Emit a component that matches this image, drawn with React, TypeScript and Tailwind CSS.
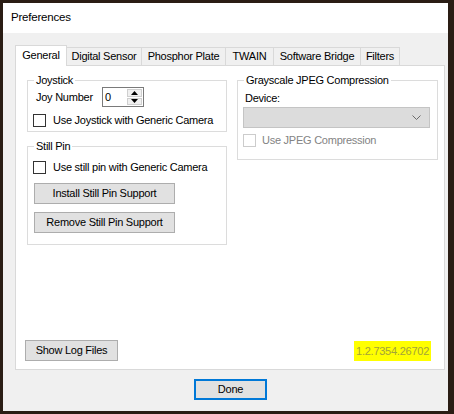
import React from "react";

const font = "font-['Liberation_Sans',Arial,sans-serif]";

const tabs = [
  { label: "General", w: "w-[52px]" },
  { label: "Digital Sensor", w: "w-[76px]" },
  { label: "Phosphor Plate", w: "w-[85px]" },
  { label: "TWAIN", w: "w-[49px]" },
  { label: "Software Bridge", w: "w-[88px]" },
  { label: "Filters", w: "w-[40px]" },
];

function Check({ disabled = false }: { disabled?: boolean }) {
  return (
    <span
      className={
        "inline-block h-[13px] w-[13px] shrink-0 border bg-white " +
        (disabled ? "border-[#cccccc]" : "border-[#333333]")
      }
    />
  );
}

function Button({ children, w }: { children: React.ReactNode; w: string }) {
  return (
    <div
      className={
        "flex h-[21px] items-center justify-center border border-[#adadad] bg-[#e1e1e1] leading-none " +
        w
      }
    >
      {children}
    </div>
  );
}

function Group({
  legend,
  className,
  children,
}: {
  legend: string;
  className?: string;
  children: React.ReactNode;
}) {
  return (
    <div className={"relative border border-[#dcdcdc] " + (className ?? "")}>
      {/* legend sits over the top border */}
      <span className="absolute -top-[8px] left-[6px] bg-white px-[2px] leading-[14px]">
        {legend}
      </span>
      {children}
    </div>
  );
}

function Spinner() {
  return (
    <div className="flex h-[20px] w-[42px] items-stretch border border-[#7a7a7a] bg-white">
      <span className="flex-1 pl-[2px] leading-[18px]">0</span>
      <div className="my-[1px] mr-[1px] flex w-[15px] flex-col gap-px">
        <div className="flex flex-1 items-center justify-center border border-[#cfcfcf] bg-[#f0f0f0]">
          <svg width="7" height="4" viewBox="0 0 7 4">
            <path d="M0 4 L3.5 0 L7 4 Z" fill="#000" />
          </svg>
        </div>
        <div className="flex flex-1 items-center justify-center border border-[#cfcfcf] bg-[#f0f0f0]">
          <svg width="7" height="4" viewBox="0 0 7 4">
            <path d="M0 0 L3.5 4 L7 0 Z" fill="#000" />
          </svg>
        </div>
      </div>
    </div>
  );
}

export default function App() {
  return (
    <div
      className={
        "h-[414px] w-[454px] overflow-hidden bg-[#2a1d14] pl-[3px] pt-[3px] text-[11px] tracking-[-0.25px] text-black " +
        font
      }
    >
      <div className="flex h-[408px] w-[445px] flex-col bg-[#f0f0f0]">
        {/* Title bar */}
        <div className="flex h-[30px] items-center bg-white pl-[8px] text-[11.5px] tracking-[-0.2px]">
          Preferences
        </div>

        <div className="pl-[12px] pr-[3px] pt-[12px]">
          {/* Tabs */}
          <div className="flex h-[20px] items-start">
            {tabs.map((t, i) =>
              i === 0 ? (
                <div
                  key={t.label}
                  className={
                    "relative z-10 flex h-[21px] items-center justify-center border-x border-t border-[#d9d9d9] bg-white pb-[2px] " +
                    t.w
                  }
                >
                  {t.label}
                </div>
              ) : (
                <div
                  key={t.label}
                  className={
                    "-ml-px mt-[2px] flex h-[18px] items-center justify-center border-x border-t border-[#d9d9d9] bg-[#f0f0f0] " +
                    t.w
                  }
                >
                  {t.label}
                </div>
              )
            )}
          </div>

          {/* Tab page */}
          <div className="flex h-[305px] flex-col border border-[#d9d9d9] bg-white">
            <div className="flex items-start gap-[10px] pl-[11px] pt-[14px]">
              {/* Left column */}
              <div className="flex w-[200px] flex-col">
                <Group legend="Joystick" className="pb-[4px] pt-[6px]">
                  <div className="flex items-center">
                    <span className="w-[74px] pl-[8px]">Joy Number</span>
                    <Spinner />
                  </div>
                  <div className="mt-[7px] flex items-center gap-[7px] pl-[5px]">
                    <Check />
                    <span className="leading-[13px]">Use Joystick with Generic Camera</span>
                  </div>
                </Group>

                <Group legend="Still Pin" className="mt-[14px] pb-[11px] pt-[14px]">
                  <div className="flex items-center gap-[7px] pl-[5px]">
                    <Check />
                    <span className="leading-[13px]">Use still pin with Generic Camera</span>
                  </div>
                  <div className="ml-[6px] mt-[9px]">
                    <Button w="w-[141px]">Install Still Pin Support</Button>
                  </div>
                  <div className="ml-[6px] mt-[8px]">
                    <Button w="w-[141px]">Remove Still Pin Support</Button>
                  </div>
                </Group>
              </div>

              {/* Right column */}
              <Group legend="Grayscale JPEG Compression" className="w-[201px] pb-[12px] pt-[10px]">
                <div className="pl-[7px] leading-[14px]">Device:</div>
                <div className="ml-[5px] mt-[2px] flex h-[21px] w-[187px] items-center justify-end border border-[#c4c4c4] bg-[#dcdcdc] pr-[8px]">
                  <svg width="9" height="5" viewBox="0 0 9 5">
                    <path d="M0.5 0.5 L4.5 4.5 L8.5 0.5" fill="none" stroke="#6a6a6a" strokeWidth="1" />
                  </svg>
                </div>
                <div className="ml-[5px] mt-[6px] flex items-center gap-[6px]">
                  <Check disabled />
                  <span className="leading-[13px] text-[#838383]">Use JPEG Compression</span>
                </div>
              </Group>
            </div>

            {/* Bottom row */}
            <div className="mt-auto flex items-center justify-between pb-[8px] pl-[9px] pr-[13px]">
              <Button w="w-[93px]">Show Log Files</Button>
              <span className="bg-[#ffff00] px-[2px] leading-[20px] text-[#a3a33a]">
                1.2.7354.26702
              </span>
            </div>
          </div>
        </div>

        {/* Done */}
        <div className="ml-[191px] mt-[9px] flex h-[21px] w-[73px] items-center justify-center border-2 border-[#0078d7] bg-[#e1e1e1] leading-none">
          Done
        </div>
      </div>
    </div>
  );
}
